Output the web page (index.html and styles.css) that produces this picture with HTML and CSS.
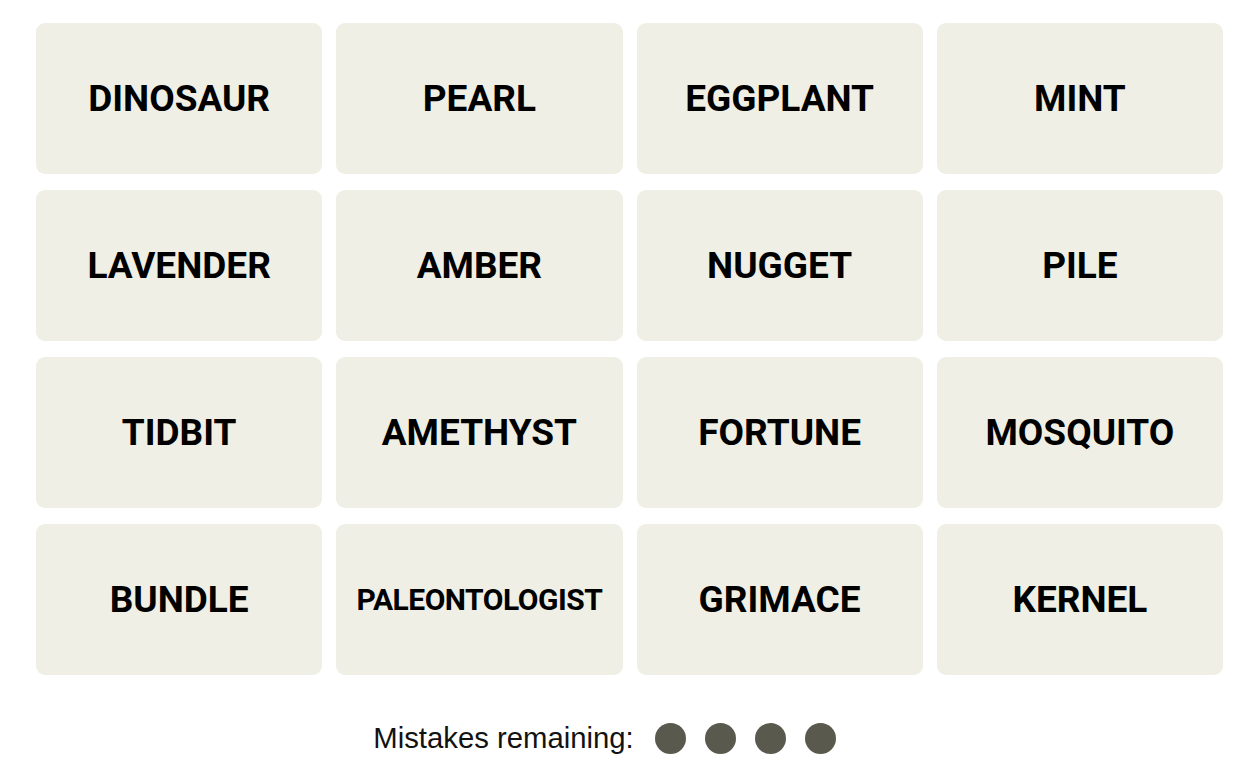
FILE: index.html
```html
<!DOCTYPE html>
<html lang="en">
<head>
<meta charset="utf-8">
<title>Connections</title>
<link rel="stylesheet" href="styles.css">
</head>
<body>
<main class="game">
  <section class="board">
    <button class="tile">DINOSAUR</button>
    <button class="tile">PEARL</button>
    <button class="tile">EGGPLANT</button>
    <button class="tile">MINT</button>
    <button class="tile">LAVENDER</button>
    <button class="tile">AMBER</button>
    <button class="tile">NUGGET</button>
    <button class="tile">PILE</button>
    <button class="tile">TIDBIT</button>
    <button class="tile">AMETHYST</button>
    <button class="tile">FORTUNE</button>
    <button class="tile">MOSQUITO</button>
    <button class="tile">BUNDLE</button>
    <button class="tile tile-small">PALEONTOLOGIST</button>
    <button class="tile">GRIMACE</button>
    <button class="tile">KERNEL</button>
  </section>
  <div class="mistakes">
    <span class="mistakes-label">Mistakes remaining:</span>
    <span class="dots">
      <span class="dot"></span>
      <span class="dot"></span>
      <span class="dot"></span>
      <span class="dot"></span>
    </span>
  </div>
</main>
</body>
</html>
```
FILE: styles.css
```css
html, body {
  margin: 0;
  padding: 0;
  background: #ffffff;
}

.game {
  padding: 23px 36px 0 36px;
}

.board {
  display: grid;
  grid-template-columns: repeat(4, 1fr);
  grid-auto-rows: 151px;
  column-gap: 14px;
  row-gap: 16px;
  width: 1187px;
}

.tile {
  border: none;
  margin: 0;
  padding: 0;
  background: #efefe6;
  border-radius: 9px;
  font-family: Roboto, "Liberation Sans", sans-serif;
  font-weight: 700;
  font-size: 37px;
  color: #000000;
  display: flex;
  align-items: center;
  justify-content: center;
  text-transform: uppercase;
}

.tile-small {
  font-size: 30px;
  letter-spacing: -0.5px;
}

.mistakes {
  display: flex;
  align-items: center;
  justify-content: center;
  margin-top: 46px;
  margin-right: 50px;
  gap: 21px;
}

.mistakes-label {
  font-family: "Liberation Sans", Arial, sans-serif;
  font-size: 29.3px;
  color: #121212;
}

.dots {
  display: flex;
  gap: 19px;
}

.dot {
  width: 31px;
  height: 31px;
  border-radius: 50%;
  background: #5a594e;
}
```
